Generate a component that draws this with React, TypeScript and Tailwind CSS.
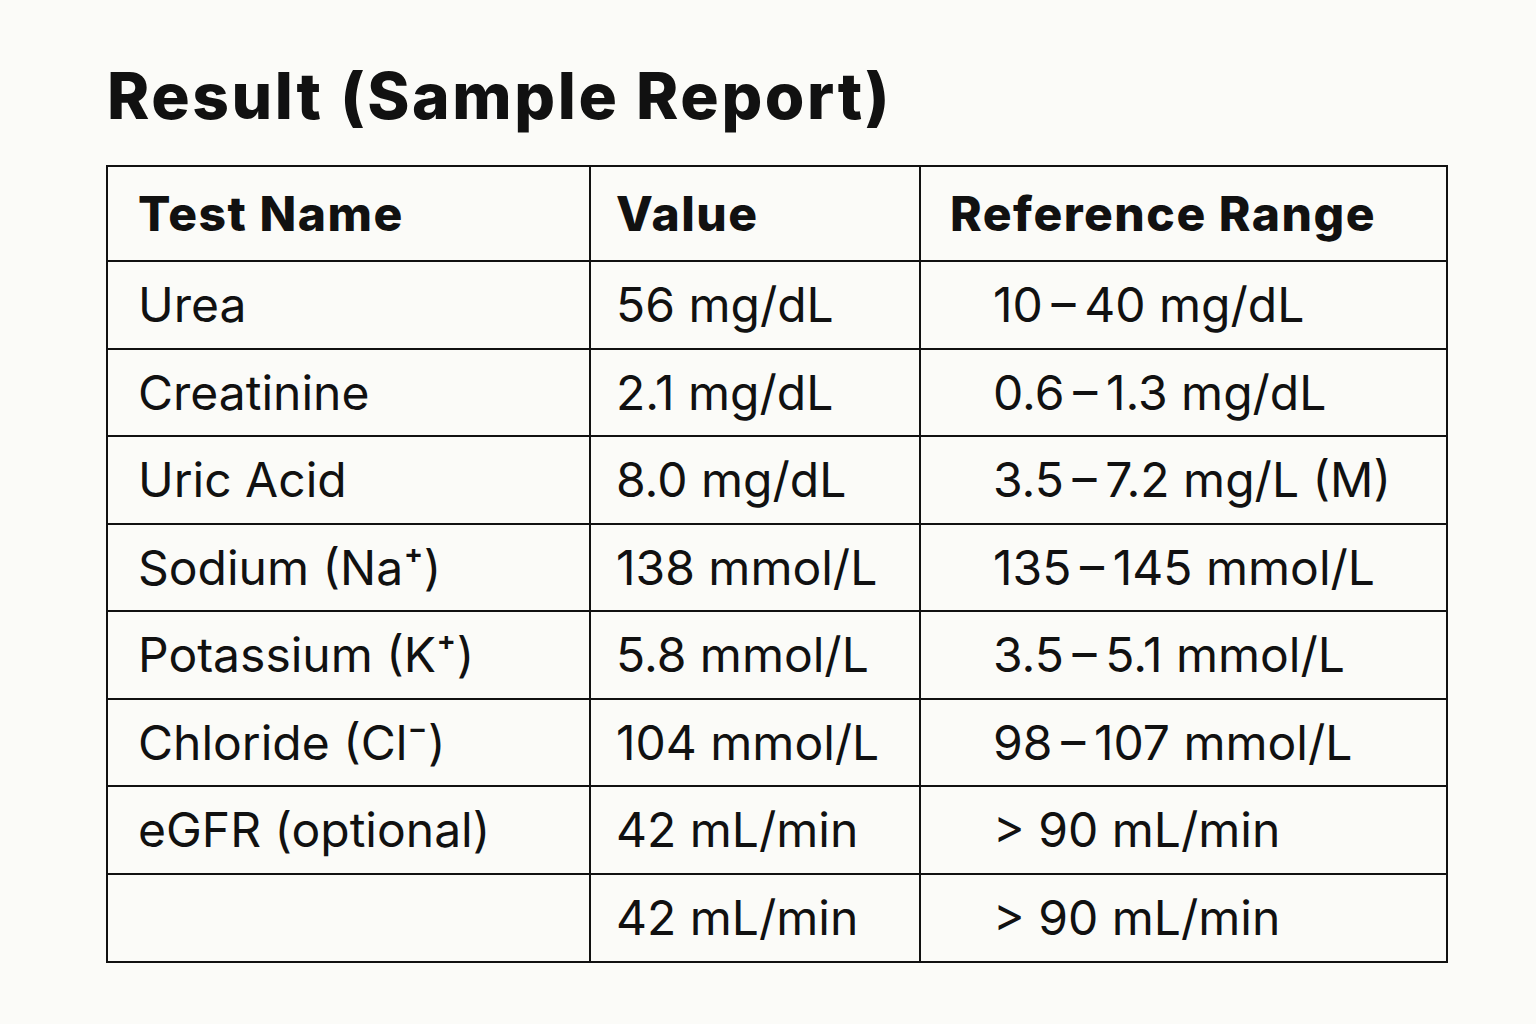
import React from "react";

const rows: [string, string, string][] = [
  ["Urea", "56 mg/dL", "10\u2009\u2013\u200940 mg/dL"],
  ["Creatinine", "2.1 mg/dL", "0.6\u2009\u2013\u20091.3 mg/dL"],
  ["Uric Acid", "8.0 mg/dL", "3.5\u2009\u2013\u20097.2 mg/L (M)"],
  ["Sodium (Na\u207A)", "138 mmol/L", "135\u2009\u2013\u2009145 mmol/L"],
  ["Potassium (K\u207A)", "5.8 mmol/L", "3.5\u2009\u2013\u20095.1 mmol/L"],
  ["Chloride (Cl\u207B)", "104 mmol/L", "98\u2009\u2013\u2009107 mmol/L"],
  ["eGFR (optional)", "42 mL/min", "> 90 mL/min"],
  ["", "42 mL/min", "> 90 mL/min"],
];

const heights = ["h-[88px]", "h-[87px]", "h-[88px]", "h-[87px]", "h-[88px]", "h-[87px]", "h-[88px]", "h-[88px]"];

export default function App() {
  return (
    <div
      className="w-[1536px] h-[1024px] bg-[#fbfbf8] text-[#111111] pt-[64px] pl-[106px]"
      style={{ fontFamily: "Inter, 'Noto Sans', sans-serif" }}
    >
      <h1 className="text-[64px] font-extrabold leading-none h-[64px] mb-[37px] pl-[1px] tracking-[2.6px]">
        Result (Sample Report)
      </h1>
      <table className="border-collapse border-2 border-[#111111] w-[1340px] table-fixed">
        <colgroup>
          <col className="w-[483px]" />
          <col className="w-[330px]" />
          <col className="w-[527px]" />
        </colgroup>
        <thead>
          <tr className="h-[95px]">
            <th className="border-2 border-[#111111] text-left font-extrabold text-[48px] tracking-[1.5px] pl-[30px] align-middle">Test Name</th>
            <th className="border-2 border-[#111111] text-left font-extrabold text-[48px] tracking-[1.5px] pl-[25px] align-middle">Value</th>
            <th className="border-2 border-[#111111] text-left font-extrabold text-[48px] tracking-[1.5px] pl-[29px] align-middle">Reference Range</th>
          </tr>
        </thead>
        <tbody>
          {rows.map((r, i) => (
            <tr key={i} className={heights[i]}>
              <td className="border-2 border-[#111111] text-[48px] font-normal pl-[30px] align-middle">{r[0]}</td>
              <td className="border-2 border-[#111111] text-[48px] font-normal pl-[25px] align-middle">{r[1]}</td>
              <td className="border-2 border-[#111111] text-[48px] font-normal pl-[72px] align-middle">{r[2]}</td>
            </tr>
          ))}
        </tbody>
      </table>
    </div>
  );
}
